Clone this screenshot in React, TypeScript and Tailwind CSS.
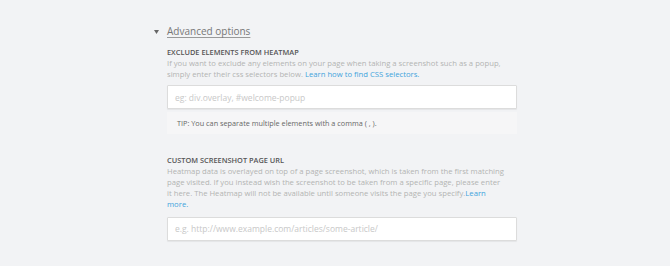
export default function App() {
  return (
    <div
      className="h-[266px] w-full overflow-hidden bg-[#f2f3f5] pt-[24px]"
      style={{ fontFamily: '"Open Sans", "Liberation Sans", sans-serif' }}
    >
      <div className="ml-[154px] w-[363px]">
        <div className="flex items-center gap-[8px]">
          <svg width="5" height="4" viewBox="0 0 5 4" className="fill-[#666]">
            <path d="M0 0 L5 0 L2.5 4 Z" />
          </svg>
          <span className="text-[10px] leading-[15px] text-[#777] underline underline-offset-2 decoration-[#999]">
            Advanced options
          </span>
        </div>

        <div className="ml-[13px]">
          <section className="mt-[8px]">
            <h3 className="text-[7.4px] font-semibold leading-[11px] text-[#555]">
              EXCLUDE ELEMENTS FROM HEATMAP
            </h3>
            <p className="text-[7.7px] leading-[10.5px] text-[#b3b3b3]">
              If you want to exclude any elements on your page when taking a screenshot such as a popup,
              simply enter their css selectors below.{" "}
              <a className="text-[#3fa3dc]">Learn how to find CSS selectors.</a>
            </p>
            <input
              placeholder="eg: div.overlay, #welcome-popup"
              className="mt-[6px] block h-[24px] w-[350px] rounded-[1px] border border-[#dcdcdc] bg-white px-[7px] text-[8.5px] text-[#555] shadow-[0_1px_1px_rgba(0,0,0,0.06)] outline-none placeholder:text-[#c8c8c8]"
            />
            <div className="mt-[3px] flex h-[22px] w-[350px] items-center bg-[#f6f6f7] px-[10px] text-[7.3px] text-[#666]">
              TIP: You can separate multiple elements with a comma ( , ).
            </div>
          </section>

          <section className="mt-[21px]">
            <h3 className="text-[7.4px] font-semibold leading-[11px] text-[#555]">
              CUSTOM SCREENSHOT PAGE URL
            </h3>
            <p className="text-[7.7px] leading-[10.9px] text-[#b3b3b3]">
              Heatmap data is overlayed on top of a page screenshot, which is taken from the first matching
              page visited. If you instead wish the screenshot to be taken from a specific page, please enter
              <br />
              it here. The Heatmap will not be available until someone visits the page you specify.
              <a className="text-[#3fa3dc]">
                Learn
                <br />
                more.
              </a>
            </p>
            <input
              placeholder="e.g. http://www.example.com/articles/some-article/"
              className="mt-[7px] block h-[24px] w-[350px] rounded-[1px] border border-[#dcdcdc] bg-white px-[7px] text-[8.5px] text-[#555] shadow-[0_1px_1px_rgba(0,0,0,0.06)] outline-none placeholder:text-[#c8c8c8]"
            />
          </section>
        </div>
      </div>
    </div>
  );
}
